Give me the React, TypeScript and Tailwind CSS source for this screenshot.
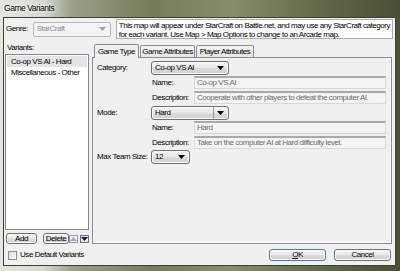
import React from "react"

const btn =
  "flex items-center justify-center rounded-[3px] border border-[#707070] bg-[linear-gradient(#f2f2f2_0%,#ebebeb_45%,#dddddd_50%,#cfcfcf_100%)] shadow-[inset_0_0_0_1px_#fcfcfc]"

function Arrow({ color = "#000" }: { color?: string }) {
  return (
    <svg width="7" height="4" viewBox="0 0 7 4">
      <path d="M0 0h7L3.5 4z" fill={color} />
    </svg>
  )
}

function Combo({ text, w, split }: { text: string; w: string; split?: boolean }) {
  return (
    <div className={`${w} h-[14px] ${btn} !justify-between pl-[3px] pr-[4px]`}>
      <span>{text}</span>
      {split ? (
        <div className="flex items-center h-full">
          <div className="w-px h-full bg-[#9a9a9a] mr-[3px]" />
          <Arrow />
        </div>
      ) : (
        <Arrow />
      )}
    </div>
  )
}

function Field({ text }: { text: string }) {
  return (
    <div className="w-[192px] h-[13px] flex items-center pl-[2px] bg-[#f4f4f4] border border-[#d8d8d8] border-t-2 border-t-[#a9a9a9] text-[#6d6d6d]">
      {text}
    </div>
  )
}

function SubRow({ label, text, mt }: { label: string; text: string; mt: string }) {
  return (
    <div className={`flex items-center ${mt} pl-[55px]`}>
      <span className="w-[42px]">{label}</span>
      <Field text={text} />
    </div>
  )
}

export default function App() {
  return (
    <div className="w-[400px] h-[271px] flex flex-col pl-[3px] pr-[4px] pb-[5px] overflow-hidden whitespace-nowrap bg-[linear-gradient(90deg,#e4e6e2_0%,#d6d9d2_11%,#9aa188_18%,#747c5a_38%,#858d69_58%,#5f6647_82%,#4a5035_100%)] font-['Liberation_Sans',Arial,sans-serif] text-[8px] tracking-[-0.45px] leading-none text-black">
      <div className="h-[17px] flex items-center pl-[1px] text-[8.5px] [text-shadow:0_0_5px_#fff,0_0_3px_#fff]">
        Game Variants
      </div>

      <div className="flex-1 flex flex-col border border-[#3d4133] bg-[#f0f0f0]">
        {/* genre + info */}
        <div className="mt-[1px] h-[20px] flex">
          <span className="w-[29px] pl-[2px] self-center">Genre:</span>
          <div className="self-center w-[79px] h-[15px] flex items-center justify-between pl-[3px] pr-[4px] border border-[#b5b8bb] rounded-[2px] bg-[#f4f4f4] text-[#8d8d8d]">
            <span>StarCraft</span>
            <Arrow color="#a0a0a0" />
          </div>
          <div className="ml-[5px] mr-[2px] flex-1 bg-white border border-[#abadb3] px-[2px] pt-[2px] leading-[8.5px]">
            This map will appear under StarCraft on Battle.net, and may use any StarCraft category
            <br />
            for each variant. Use Map &gt; Map Options to change to an Arcade map.
          </div>
        </div>

        <div className="mt-[2px] flex">
          {/* variants */}
          <div className="ml-[1px] w-[84px] flex flex-col">
            <div className="h-[13px] pl-[2px] flex items-center">Variants:</div>
            <div className="h-[176px] border border-[#828790] bg-white p-[1px]">
              <div className="h-[11px] pl-[4px] flex items-center bg-[#e4e4e4]">Co-op VS AI - Hard</div>
              <div className="h-[11px] pl-[4px] flex items-center">Miscellaneous - Other</div>
            </div>
            <div className="mt-[3px] h-[11px] flex items-center">
              <div className={`ml-[1px] w-[31px] h-[11px] ${btn}`}>Add</div>
              <div className={`ml-[6px] w-[26px] h-[11px] ${btn}`}>Delete</div>
              <div className="w-[9px] h-[8px] flex items-center justify-center border border-[#9a9a9a] bg-[#f2f2f2]">
                <svg width="7" height="4" viewBox="0 0 7 4">
                  <path d="M0 4h7L3.5 0z" fill="#a99dd8" />
                </svg>
              </div>
              <div className="ml-[2px] w-[9px] h-[8px] flex items-center justify-center border border-[#707070] bg-[#e6e6e6]">
                <Arrow color="#1b0f5e" />
              </div>
            </div>
          </div>

          {/* tabs */}
          <div className="ml-[3px] w-[300px] pt-[3px] flex flex-col">
            <div className="h-[13px] flex items-end pl-[2px]">
              <div className="relative z-10 -mb-px w-[45px] h-[14px] flex items-center justify-center border border-b-0 border-[#898c95] rounded-t-[2px] bg-[#f0f0f0]">
                Game Type
              </div>
              <div className="ml-px w-[55px] h-[12px] flex items-center justify-center border border-b-0 border-[#898c95] rounded-t-[2px] bg-[linear-gradient(#f4f4f4,#e6e6e6)]">
                Game Attributes
              </div>
              <div className="ml-px w-[58px] h-[12px] flex items-center justify-center border border-b-0 border-[#898c95] rounded-t-[2px] bg-[linear-gradient(#f4f4f4,#e6e6e6)]">
                Player Attributes
              </div>
            </div>
            <div className="h-[187px] border border-[#898c95] bg-[#f0f0f0] shadow-[inset_-1px_-1px_0_#ffffff] pl-[4px] pt-[3px] flex flex-col">
              <div className="flex items-center">
                <span className="w-[54px]">Category:</span>
                <Combo text="Co-op VS AI" w="w-[78px]" />
              </div>
              <SubRow label="Name:" text="Co-op VS AI" mt="mt-[1px]" />
              <SubRow label="Description:" text="Cooperate with other players to defeat the computer AI." mt="mt-[2px]" />
              <div className="mt-[2px] flex items-center">
                <span className="w-[54px]">Mode:</span>
                <Combo text="Hard" w="w-[78px]" split />
              </div>
              <SubRow label="Name:" text="Hard" mt="mt-[1px]" />
              <SubRow label="Description:" text="Take on the computer AI at Hard difficulty level." mt="mt-[2px]" />
              <div className="mt-[1px] flex items-center">
                <span className="w-[54px]">Max Team Size:</span>
                <Combo text="12" w="w-[39px]" />
              </div>
            </div>
          </div>
        </div>

        {/* footer */}
        <div className="mt-[5px] h-[12px] flex items-center">
          <div className="ml-[4px] w-[9px] h-[9px] border border-[#8f8f8f] bg-[linear-gradient(135deg,#dcdcdc,#fafafa)]" />
          <span className="ml-[3px]">Use Default Variants</span>
          <div className={`ml-auto w-[57px] h-[12px] ${btn} !border-[#3c7fb1] shadow-[inset_0_0_0_1px_#a6dcf5]`}>
            <span className="underline">O</span>K
          </div>
          <div className={`ml-[8px] mr-[4px] w-[57px] h-[12px] ${btn}`}>Cancel</div>
        </div>
      </div>
    </div>
  )
}
